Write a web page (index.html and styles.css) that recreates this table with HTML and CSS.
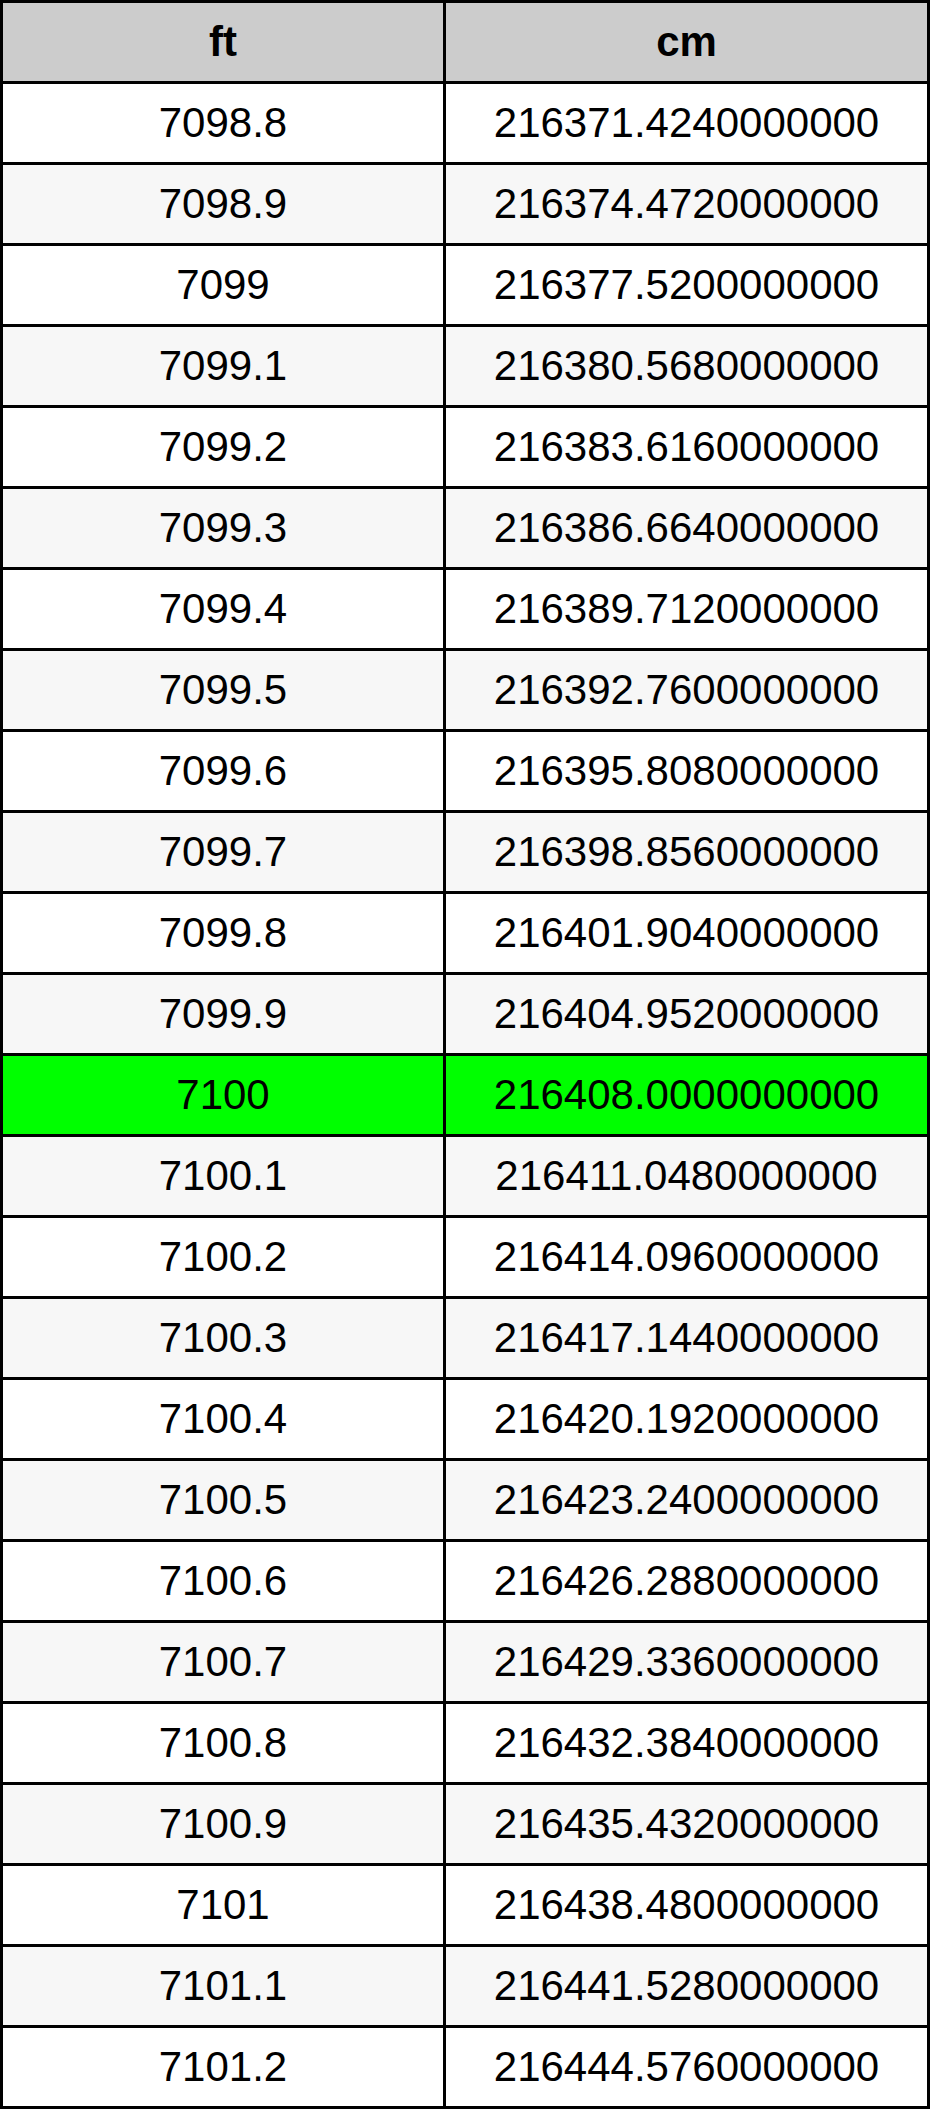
FILE: index.html
```html
<!DOCTYPE html>
<html>
<head>
<meta charset="utf-8">
<link rel="stylesheet" href="styles.css">
</head>
<body>
<table class="conv">
<thead>
<tr><th class="c1">ft</th><th class="c2">cm</th></tr>
</thead>
<tbody>
<tr><td>7098.8</td><td>216371.4240000000</td></tr>
<tr class="alt"><td>7098.9</td><td>216374.4720000000</td></tr>
<tr><td>7099</td><td>216377.5200000000</td></tr>
<tr class="alt"><td>7099.1</td><td>216380.5680000000</td></tr>
<tr><td>7099.2</td><td>216383.6160000000</td></tr>
<tr class="alt"><td>7099.3</td><td>216386.6640000000</td></tr>
<tr><td>7099.4</td><td>216389.7120000000</td></tr>
<tr class="alt"><td>7099.5</td><td>216392.7600000000</td></tr>
<tr><td>7099.6</td><td>216395.8080000000</td></tr>
<tr class="alt"><td>7099.7</td><td>216398.8560000000</td></tr>
<tr><td>7099.8</td><td>216401.9040000000</td></tr>
<tr class="alt"><td>7099.9</td><td>216404.9520000000</td></tr>
<tr class="hl"><td>7100</td><td>216408.0000000000</td></tr>
<tr class="alt"><td>7100.1</td><td>216411.0480000000</td></tr>
<tr><td>7100.2</td><td>216414.0960000000</td></tr>
<tr class="alt"><td>7100.3</td><td>216417.1440000000</td></tr>
<tr><td>7100.4</td><td>216420.1920000000</td></tr>
<tr class="alt"><td>7100.5</td><td>216423.2400000000</td></tr>
<tr><td>7100.6</td><td>216426.2880000000</td></tr>
<tr class="alt"><td>7100.7</td><td>216429.3360000000</td></tr>
<tr><td>7100.8</td><td>216432.3840000000</td></tr>
<tr class="alt"><td>7100.9</td><td>216435.4320000000</td></tr>
<tr><td>7101</td><td>216438.4800000000</td></tr>
<tr class="alt"><td>7101.1</td><td>216441.5280000000</td></tr>
<tr><td>7101.2</td><td>216444.5760000000</td></tr>
</tbody>
</table>
</body>
</html>
```
FILE: styles.css
```css
html, body {
  margin: 0;
  padding: 0;
  background: #ffffff;
}
.conv {
  border-collapse: collapse;
  width: 930px;
  table-layout: fixed;
  font-family: "Liberation Sans", Arial, sans-serif;
  font-size: 42px;
  color: #000;
  border: 3px solid #000;
}
.conv th, .conv td {
  border: 3px solid #000;
  height: 78px;
  padding: 0;
  text-align: center;
  vertical-align: middle;
  line-height: 1;
}
.conv th {
  background: #cccccc;
  font-weight: bold;
}
.conv .c1 {
  width: 440px;
}
.conv td {
  background: #ffffff;
}
.conv tr.alt td {
  background: #f7f7f7;
}
.conv tr.hl td {
  background: #00ff00;
}
```
